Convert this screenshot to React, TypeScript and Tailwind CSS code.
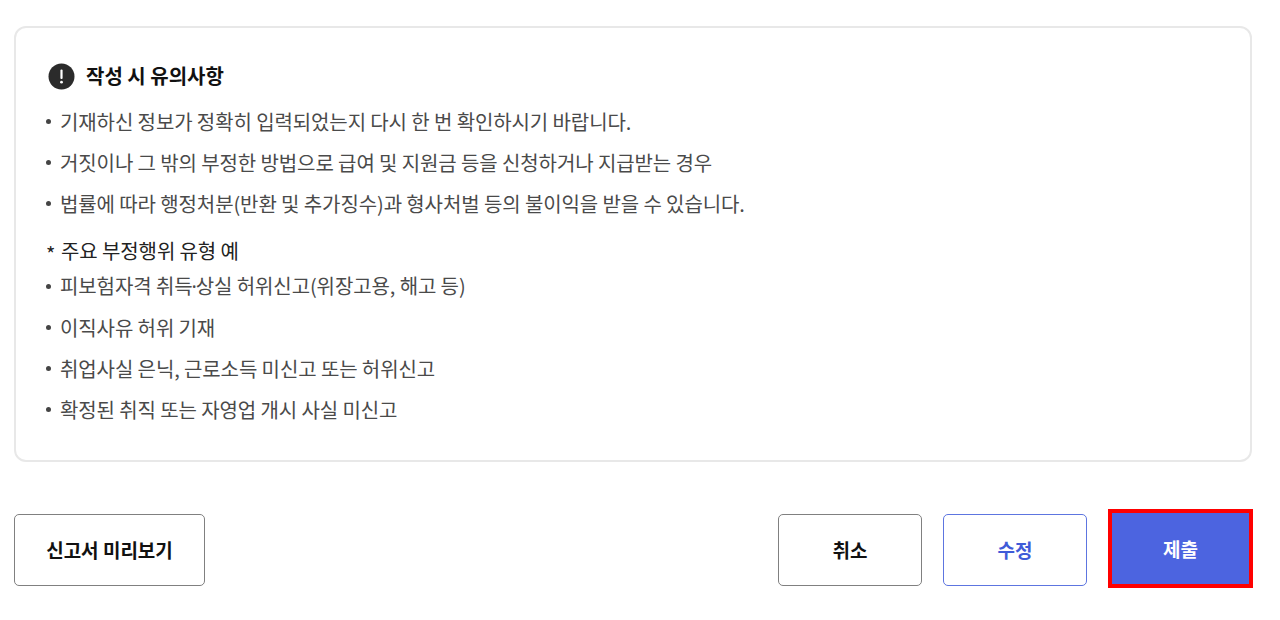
import type { ReactNode } from "react";

const notices: ReactNode[] = [
  "기재하신 정보가 정확히 입력되었는지 다시 한 번 확인하시기 바랍니다.",
  "거짓이나 그 밖의 부정한 방법으로 급여 및 지원금 등을 신청하거나 지급받는 경우",
  "법률에 따라 행정처분(반환 및 추가징수)과 형사처벌 등의 불이익을 받을 수 있습니다.",
];

const examples: ReactNode[] = [
  <>
    피보험자격 취득<span className="font-['Noto_Sans'] mx-[-1px]">·</span>상실 허위신고(위장고용, 해고 등)
  </>,
  "이직사유 허위 기재",
  "취업사실 은닉, 근로소득 미신고 또는 허위신고",
  "확정된 취직 또는 자영업 개시 사실 미신고",
];

function BulletList({ items }: { items: ReactNode[] }) {
  return (
    <ul className="flex flex-col gap-[14px]">
      {items.map((item, i) => (
        <li key={i} className="flex items-center h-[27px] text-[20px] tracking-[-0.1px] text-[#4a4a4a]">
          <span className="w-[5px] h-[5px] rounded-full bg-[#444444] ml-[30px] mr-[9px]" />
          <span>{item}</span>
        </li>
      ))}
    </ul>
  );
}

export default function App() {
  return (
    <div
      className="w-[1280px] h-[620px] bg-white pt-[26px] pl-[14px] pr-[27px]"
      style={{ fontFamily: '"Noto Sans CJK KR", "Noto Sans", sans-serif' }}
    >
      <div className="w-[1238px] h-[436px] border-2 border-[#e8e8e8] rounded-[12px] pt-[34px]">
        <div className="flex items-center h-[28px] ml-[32px] gap-[11px] mb-[18px]">
          <svg width="27" height="27" viewBox="0 0 27 27">
            <circle cx="13.5" cy="13.5" r="13" fill="#2b2b2b" />
            <rect x="12.4" y="6.5" width="2.2" height="9.5" rx="1" fill="#ffffff" />
            <circle cx="13.5" cy="19.2" r="1.4" fill="#ffffff" />
          </svg>
          <span className="text-[20px] font-bold text-[#111111]">작성 시 유의사항</span>
        </div>
        <BulletList items={notices} />
        <div className="flex items-center h-[27px] mt-[20px] mb-[9px] text-[20px] tracking-[-0.1px] text-[#222222]">
          <span className="ml-[30px] w-[15px] pt-[7px]">*</span>
          <span>주요 부정행위 유형 예</span>
        </div>
        <BulletList items={examples} />
      </div>
      <div className="flex items-start justify-between mt-[47px]">
        <button className="mt-[5px] w-[191px] h-[72px] border border-[#808080] rounded-[5px] text-[19px] font-bold text-[#111111] bg-white">
          신고서 미리보기
        </button>
        <div className="flex items-start gap-[21px]">
          <button className="mt-[5px] w-[144px] h-[72px] border border-[#808080] rounded-[5px] text-[19px] font-bold text-[#111111] bg-white">
            취소
          </button>
          <button className="mt-[5px] w-[144px] h-[72px] border border-[#5d75e0] rounded-[5px] text-[19px] font-bold text-[#3f5bd8] bg-white">
            수정
          </button>
          <button className="w-[145px] h-[79px] border-[4px] border-[#ff0000] bg-[#4c64e0] pt-[1px] text-[19px] font-bold text-white">
            제출
          </button>
        </div>
      </div>
    </div>
  );
}
